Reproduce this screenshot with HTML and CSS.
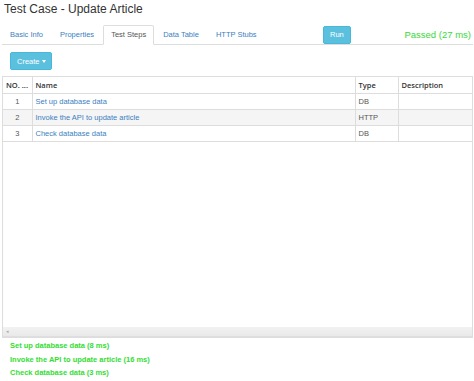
FILE: index.html
```html
<!DOCTYPE html>
<html lang="en">
    <head>
        <meta charset="UTF-8" />
        <meta name="viewport" content="width=device-width, initial-scale=1.0" />
        <title>Test Case - Update Article</title>
        <link rel="stylesheet" href="styles.css">
    </head>
    <body>
        <div class="page">
            <h1 class="title">Test Case - Update Article</h1>

            <div class="tabbar">
                <ul class="tabs">
                    <li>Basic Info</li>
                    <li>Properties</li>
                    <li class="active">Test Steps</li>
                    <li>Data Table</li>
                    <li>HTTP Stubs</li>
                </ul>
                <div class="actions">
                    <button type="button" class="btn">Run</button>
                    <span class="status">Passed (27 ms)</span>
                </div>
            </div>

            <div class="toolbar">
                <button type="button" class="btn create">Create <span class="caret"></span></button>
            </div>

            <div class="grid">
                <table class="steps">
                    <colgroup>
                        <col class="col-no" />
                        <col class="col-name" />
                        <col class="col-type" />
                        <col />
                    </colgroup>
                    <thead>
                        <tr>
                            <th>NO. ...</th>
                            <th>Name</th>
                            <th>Type</th>
                            <th>Description</th>
                        </tr>
                    </thead>
                    <tbody>
                        <tr>
                            <td class="num">1</td>
                            <td><a href="#">Set up database data</a></td>
                            <td>DB</td>
                            <td></td>
                        </tr>
                        <tr>
                            <td class="num">2</td>
                            <td><a href="#">Invoke the API to update article</a></td>
                            <td>HTTP</td>
                            <td></td>
                        </tr>
                        <tr>
                            <td class="num">3</td>
                            <td><a href="#">Check database data</a></td>
                            <td>DB</td>
                            <td></td>
                        </tr>
                    </tbody>
                </table>
                <div class="hscroll"><span class="arrow">&#9666;</span></div>
            </div>

            <ul class="results">
                <li>Set up database data (8 ms)</li>
                <li>Invoke the API to update article (16 ms)</li>
                <li>Check database data (3 ms)</li>
            </ul>
        </div>
    </body>
</html>
```

FILE: styles.css
```css
body {
    margin: 0;
    font-family: Arial, "Liberation Sans", sans-serif;
    font-size: 7.5px;
    color: #333;
    background-color: #fff;
}

.page {
    padding: 0 1px 0 2px;
}

.title {
    margin: 2px 0 9px 2px;
    font-size: 12px;
    font-weight: normal;
    line-height: 14px;
    color: #333;
}

/* tabs row */
.tabbar {
    display: grid;
    grid-template-columns: 2fr 1fr;
    height: 19px;
    border-bottom: 1px solid #ddd;
}

.tabs {
    display: flex;
    align-items: flex-end;
    margin: 0;
    padding: 0;
    list-style: none;
}

.tabs li {
    margin-right: 1px;
    margin-bottom: -1px;
    padding: 0 7px;
    line-height: 18px;
    border: 1px solid transparent;
    border-radius: 2px 2px 0 0;
    color: #3a7fbf;
}

.tabs li.active {
    color: #555;
    background-color: #fff;
    border-color: #ddd #ddd transparent;
}

.actions {
    display: flex;
    align-items: center;
    justify-content: space-between;
    padding: 0 2px 0 7px;
}

.btn {
    height: 18px;
    padding: 0 6px;
    font: inherit;
    color: #fff;
    background-color: #5bc0de;
    border: 1px solid #46b8da;
    border-radius: 2px;
}

.status {
    font-size: 9.5px;
    color: #3ad83a;
}

.toolbar {
    padding: 7px 0 6px 8px;
}

.create {
    padding: 0 5px 0 6px;
}

.caret {
    display: inline-block;
    width: 0;
    height: 0;
    margin-left: 0;
    vertical-align: middle;
    border-top: 3px solid #fff;
    border-left: 2.5px solid transparent;
    border-right: 2.5px solid transparent;
}

/* steps grid */
.grid {
    display: flex;
    flex-direction: column;
    justify-content: space-between;
    height: 260px;
    border: 1px solid #ddd;
}

.steps {
    width: 100%;
    border-collapse: collapse;
    table-layout: fixed;
}

.col-no {
    width: 29px;
}

.col-name {
    width: 323px;
}

.col-type {
    width: 43px;
}

.steps th,
.steps td {
    padding: 0 3px;
    text-align: left;
    border-bottom: 1px solid #ddd;
    border-left: 1px solid #ddd;
    white-space: nowrap;
    overflow: hidden;
}

.steps th:first-child,
.steps td:first-child {
    border-left: none;
}

.steps th {
    height: 16px;
    font-family: "Open Sans", Arial, sans-serif;
    font-weight: 600;
    font-size: 7.5px;
    color: #333;
}

.steps td {
    height: 15px;
    color: #555;
}

.steps tbody tr:nth-child(even) td {
    background-color: #f5f5f5;
}

.steps td.num {
    text-align: center;
}

.steps a {
    color: #3a7fbf;
    text-decoration: none;
}

.hscroll {
    height: 10px;
    background: linear-gradient(#f2f2f2, #e9e9e9);
    border-bottom: 1px solid #dedede;
    box-sizing: border-box;
}

.hscroll .arrow {
    display: block;
    padding-left: 3px;
    font-size: 5px;
    line-height: 9px;
    color: #aaa;
}

.results {
    margin: 0;
    padding: 1px 0 0 8px;
    list-style: none;
    font-weight: bold;
    line-height: 13.5px;
    color: #33dd33;
}
```
